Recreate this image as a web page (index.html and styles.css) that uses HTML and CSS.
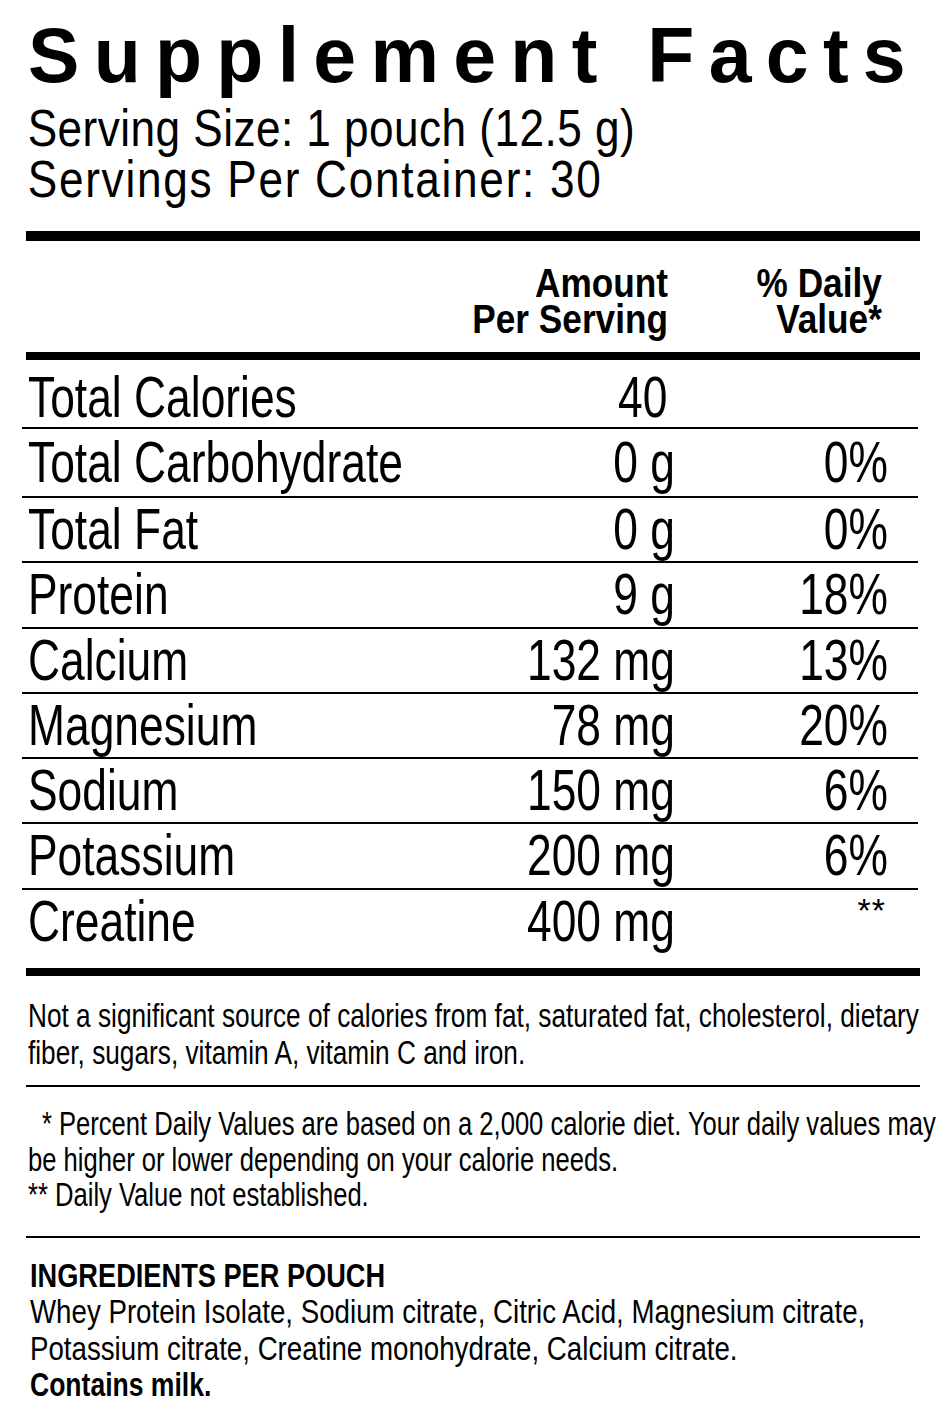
FILE: index.html
```html
<!DOCTYPE html>
<html lang="en">
<head>
<meta charset="utf-8">
<title>Supplement Facts</title>
<link rel="stylesheet" href="styles.css">
</head>
<body>
<main class="label">
  <h1 class="title">Supplement Facts</h1>
  <div class="servings">
    <p class="serving">Serving Size: 1 pouch (12.5 g)</p>
    <p class="serving serving-2">Servings Per Container: 30</p>
  </div>
  <div class="rule rule-top"></div>
  <div class="head">
    <span class="head-amt">Amount<br>Per Serving</span>
    <span class="head-dv">% Daily<br>Value*</span>
  </div>
  <div class="rule rule-head"></div>
  <div class="rows">
    <div class="row row-first"><span class="name">Total Calories</span><span class="amt amt-plain">40</span><span class="dv"></span></div>
    <div class="row row-second"><span class="name">Total Carbohydrate</span><span class="amt">0 g</span><span class="dv">0%</span></div>
    <div class="row"><span class="name">Total Fat</span><span class="amt">0 g</span><span class="dv">0%</span></div>
    <div class="row"><span class="name">Protein</span><span class="amt">9 g</span><span class="dv">18%</span></div>
    <div class="row"><span class="name">Calcium</span><span class="amt">132 mg</span><span class="dv">13%</span></div>
    <div class="row"><span class="name">Magnesium</span><span class="amt">78 mg</span><span class="dv">20%</span></div>
    <div class="row"><span class="name">Sodium</span><span class="amt">150 mg</span><span class="dv">6%</span></div>
    <div class="row"><span class="name">Potassium</span><span class="amt">200 mg</span><span class="dv">6%</span></div>
    <div class="row row-last"><span class="name">Creatine</span><span class="amt">400 mg</span><span class="star">**</span></div>
  </div>
  <div class="rule rule-bottom"></div>
  <div class="note-wrap note-wrap-1">
    <p class="note note-1">Not a significant source of calories from fat, saturated fat, cholesterol, dietary fiber, sugars, vitamin A, vitamin C and iron.</p>
  </div>
  <div class="rule rule-thin"></div>
  <div class="note-wrap note-wrap-2">
    <p class="note note-2"><span class="dv-first">* Percent Daily Values are based on a 2,000 calorie diet. Your daily values may</span><br>be higher or lower depending on your calorie needs.<br>** Daily Value not established.</p>
  </div>
  <div class="rule rule-thin"></div>
  <section class="ingredients">
    <h2 class="ingr-title">INGREDIENTS PER POUCH</h2>
    <p class="ingr-text">Whey Protein Isolate, Sodium citrate, Citric Acid, Magnesium citrate, Potassium citrate, Creatine monohydrate, Calcium citrate.</p>
    <p class="ingr-milk">Contains milk.</p>
  </section>
</main>
</body>
</html>
```

FILE: styles.css
```css
* { box-sizing: border-box; }
html, body { margin: 0; padding: 0; background: #fff; }
body {
  color: #000;
  font-family: "Liberation Sans", Arial, sans-serif;
  width: 948px;
  overflow: hidden;
}
.label {
  padding: 0 28px 0 26px;
  width: 948px;
}

/* Title */
.title {
  margin: 0;
  padding: 13px 0 0 2px;
  font-weight: 700;
  font-size: 77px;
  line-height: 84px;
  letter-spacing: 14.3px;
  white-space: nowrap;
}

/* Serving info (condensed type) */
.servings { margin-top: 6px; }
.serving {
  margin: 0;
  padding-left: 2px;
  font-size: 52px;
  line-height: 51px;
  letter-spacing: 0.5px;
  white-space: nowrap;
  transform: scaleX(0.85);
  transform-origin: 0 0;
}
.serving-2 { letter-spacing: 2px; }

/* Rules */
.rule { background: #000; }
.rule-top { height: 10px; margin-top: 26px; }
.rule-head { height: 8px; margin-top: 15px; }
.rule-bottom { height: 8px; }
.rule-thin { height: 2px; }

/* Column header */
.head {
  display: grid;
  grid-template-columns: minmax(0, 1fr) 245px 213px 32px;
  padding-top: 24px;
  font-weight: 700;
  font-size: 40px;
  line-height: 36px;
}
.head-amt, .head-dv {
  text-align: right;
  white-space: nowrap;
  transform: scaleX(0.88);
  transform-origin: 100% 0;
}
.head-amt { grid-column: 2; padding-right: 8px; }
.head-dv { grid-column: 3; padding-right: 7px; }

/* Nutrient rows */
.rows { margin-left: -4px; margin-right: 2px; }
.row {
  display: grid;
  grid-template-columns: minmax(0, 1fr) 245px 213px 30px;
  height: 65.3px;
  border-bottom: 2px solid #000;
  font-size: 58px;
  line-height: 62px;
  padding-left: 6px;
}
.row-first { height: 69px; padding-top: 6px; }
.row-second { height: 69px; padding-top: 2px; }
.row-last { height: 78px; border-bottom: 0; }
.name, .amt, .dv {
  min-width: 0;
  white-space: nowrap;
  transform: scaleX(0.765);
}
.name { grid-column: 1; transform-origin: 0 0; }
.amt { grid-column: 2; text-align: right; transform-origin: 100% 0; }
.amt-plain { padding-right: 10px; }
.dv { grid-column: 3; text-align: right; transform-origin: 100% 0; }
.star {
  grid-column: 3;
  text-align: right;
  font-size: 34px;
  line-height: 34px;
  letter-spacing: 1px;
  padding-top: 3px;
  padding-right: 2px;
}

/* Footnotes (condensed text blocks) */
.note {
  margin: 0;
  font-size: 33px;
  transform-origin: 0 0;
}
.note-wrap-1 { padding: 21px 0 14px 2px; height: 109px; }
.note-1 {
  width: 1150px;
  line-height: 37px;
  transform: scaleX(0.795);
}
.note-wrap-2 { padding: 19.6px 0 0 2px; height: 149px; }
.note-2 {
  line-height: 35.5px;
  white-space: nowrap;
  transform: scaleX(0.775);
}
.dv-first { padding-left: 18px; }

/* Ingredients */
.ingredients { padding: 19px 0 0 4px; }
.ingr-title, .ingr-text, .ingr-milk {
  margin: 0;
  font-size: 34px;
  line-height: 36.5px;
  transform-origin: 0 0;
}
.ingr-title {
  font-weight: 700;
  white-space: nowrap;
  transform: scaleX(0.8);
}
.ingr-text {
  width: 1060px;
  font-weight: 400;
  transform: scaleX(0.814);
}
.ingr-milk {
  font-weight: 700;
  white-space: nowrap;
  transform: scaleX(0.78);
}
```
